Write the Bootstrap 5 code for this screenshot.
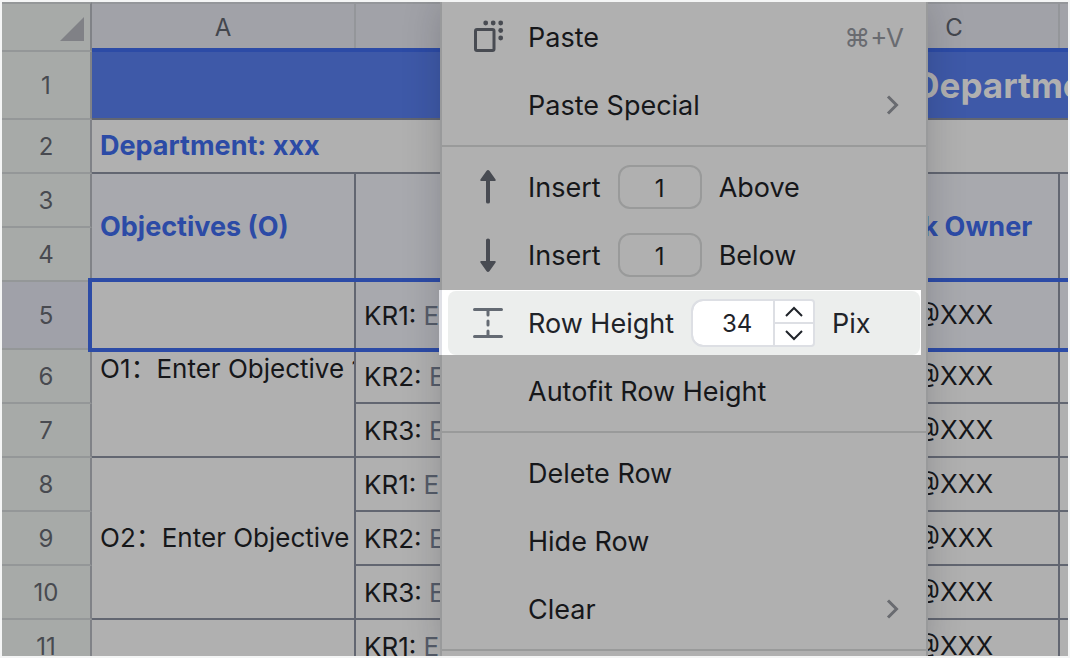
<!DOCTYPE html>
<html lang="en">
<head>
<meta charset="utf-8">
<meta name="viewport" content="width=device-width, initial-scale=1">
<title>Row height menu</title>
<link href="https://cdn.jsdelivr.net/npm/bootstrap@5.3.0/dist/css/bootstrap.min.css" rel="stylesheet">
<style>
  body { font-family: Inter, "Noto Sans CJK SC", sans-serif; background: #f4f5f5; color: #16171a; padding: 2px; }
  .sheet-view { background: #b0b0b0; }

  /* Spreadsheet grid */
  .sheet { table-layout: fixed; width: 2024px; border-collapse: separate; border-spacing: 0; font-size: 26px; line-height: 32px; }
  .sheet .w-num { width: 90px; }
  .sheet .w-a { width: 264px; }
  .sheet .w-b { width: 494px; }
  .sheet .w-c { width: 210px; }
  .sheet th, .sheet td { height: 54px; padding: 0 8px; border: 0 solid #626671; border-width: 0 2px 2px 0; vertical-align: middle; white-space: nowrap; overflow: hidden; background: #b0b0b0; }
  .sheet thead th { height: 50px; padding-top: 2px; border-color: #94969a; border-width: 2px 2px 2px 0; background: #a1a2a8; color: #43464d; font-size: 24px; font-weight: 400; text-align: center; }
  .sheet th.num, .sheet thead th.corner { background: #a7aaa8; color: #484a50; border-color: #949798; border-right-color: #808287; font-size: 24px; font-weight: 400; text-align: center; padding: 2px 0 0; }
  .sheet thead th.corner { position: relative; overflow: visible; }
  .sheet thead th.corner::after { content: ""; position: absolute; z-index: 1; left: 90px; bottom: -2px; width: 2000px; height: 4px; background: #2c4ba6; }
  .sheet .tall > * { height: 68px; }
  .sheet td.title { background: #3e59a8; color: #b0b0b0; font-size: 35px; line-height: 44px; font-weight: 700; text-align: center; }
  .sheet .heading { color: #2c4ba6; font-size: 27px; font-weight: 700; }
  .sheet td.shade { background: #a8a9ae; }
  .sheet td.result { padding-top: 2px; }
  .sheet .hint { color: #555c69; }
  .sheet .picked th.num { position: relative; overflow: visible; background: #a0a1a9; }
  .sheet .picked th.num::after { content: ""; position: absolute; z-index: 1; left: 86px; top: -4px; bottom: -4px; width: 2000px; border: 4px solid #2c4ba6; pointer-events: none; }
  .corner svg { display: block; margin: 2px 6px 0 auto; }

  /* Context menu */
  .ctx-menu { left: 438px; top: 0; bottom: 0; z-index: 2; width: 488px; padding-top: 1px; background: #b0b0b0; border: solid #999a9b; border-width: 0 2px; box-shadow: 0 0 36px rgba(20, 22, 30, .2); font-size: 27px; line-height: 32px; }
  .entry { height: 68px; padding: 0 22px 0 30px; gap: 17px; }
  .entry > span, .entry > label { padding-top: 2px; }
  button.entry { background: none; border: 0; color: inherit; width: 100%; text-align: left; }
  .entry-icon { width: 32px; height: 40px; margin-right: 7px; flex: none; color: #484b52; }
  .rule { height: 2px; margin: 6px 0; background: #999a9a; }
  .keys { color: #696b70; font-size: 26px; }
  .arrow { color: #696b70; margin-right: 4px; }
  .count { width: 84px; height: 44px; border: 2px solid #999a9a; border-radius: 12px; background: none; color: inherit; font-size: 24px; text-align: center; padding: 2px 0 0; }

  /* Spotlit entry */
  .spot { position: relative; color: #1f2329; }
  .spot::before { content: ""; position: absolute; left: -3px; right: 5px; top: 1px; height: 65px; background: #fff; border-left: 3px solid #dfe0e6; }
  .spot::after { content: ""; position: absolute; left: 6px; right: 6px; top: 2px; height: 64px; background: #eceeed; border-radius: 8px; }
  .spot > * { position: relative; z-index: 1; }
  .spot .entry-icon { color: #646a73; }
  .stepper { width: 124px; height: 48px; border: 2px solid #dddfe4; border-radius: 12px 4px 4px 12px; background: #dddfe4; overflow: hidden; }
  .stepper input { width: 80px; border: 0; padding: 2px 0 0 8px; background: #fff; color: inherit; font-size: 24px; text-align: center; border-radius: 10px 0 0 10px; }
  .stepper .steps { gap: 2px; margin-left: 2px; }
  .stepper button { border: 0; padding: 0; background: #fff; color: #1f2329; flex: 1; display: flex; align-items: center; justify-content: center; }
</style>
</head>
<body class="vh-100">
<main class="sheet-view position-relative overflow-hidden h-100">
  <table class="sheet">
    <colgroup><col class="w-num"><col class="w-a"><col class="w-b"><col class="w-c"><col></colgroup>
    <thead>
      <tr>
        <th class="corner"><svg width="24" height="24" viewBox="0 0 24 24" aria-hidden="true"><path d="M24 0v24H0z" fill="#808186"/></svg></th>
        <th scope="col">A</th><th scope="col"></th><th scope="col">C</th><th scope="col"></th>
      </tr>
    </thead>
    <tbody>
      <tr class="tall"><th class="num" scope="row">1</th><td class="title" colspan="4">Department OKR</td></tr>
      <tr><th class="num" scope="row">2</th><td class="heading" colspan="4">Department: xxx</td></tr>
      <tr><th class="num" scope="row">3</th><td class="heading shade" rowspan="2">Objectives (O)</td><td class="shade" rowspan="2"></td><td class="heading shade text-center" rowspan="2">Task Owner</td><td class="shade" rowspan="2"></td></tr>
      <tr><th class="num" scope="row">4</th></tr>
      <tr class="tall picked"><th class="num" scope="row">5</th><td rowspan="3">O1：Enter Objective 1</td><td class="result shade">KR1: <span class="hint">E</span></td><td class="shade text-center">@XXX</td><td class="shade"></td></tr>
      <tr><th class="num" scope="row">6</th><td class="result">KR2: <span class="hint">E</span></td><td class="text-center">@XXX</td><td></td></tr>
      <tr><th class="num" scope="row">7</th><td class="result">KR3: <span class="hint">E</span></td><td class="text-center">@XXX</td><td></td></tr>
      <tr><th class="num" scope="row">8</th><td rowspan="3">O2：Enter Objective</td><td class="result">KR1: <span class="hint">E</span></td><td class="text-center">@XXX</td><td></td></tr>
      <tr><th class="num" scope="row">9</th><td class="result">KR2: <span class="hint">E</span></td><td class="text-center">@XXX</td><td></td></tr>
      <tr><th class="num" scope="row">10</th><td class="result">KR3: <span class="hint">E</span></td><td class="text-center">@XXX</td><td></td></tr>
      <tr><th class="num" scope="row">11</th><td></td><td class="result">KR1: <span class="hint">E</span></td><td class="text-center">@XXX</td><td></td></tr>
    </tbody>
  </table>

  <div class="ctx-menu position-absolute">
    <button type="button" class="entry d-flex align-items-center">
      <svg class="entry-icon" viewBox="0 0 32 40" aria-hidden="true"><rect x="3.5" y="12.500" width="18.500" height="21" rx="1.500" fill="none" stroke="currentColor" stroke-width="3"/><g fill="currentColor"><circle cx="13.700" cy="6" r="2.400"/><circle cx="21.200" cy="6" r="2.400"/><circle cx="28.700" cy="6" r="2.400"/><circle cx="28.700" cy="13.500" r="2.400"/><circle cx="28.700" cy="21" r="2.400"/></g></svg>
      <span>Paste</span><span class="keys ms-auto">⌘+V</span>
    </button>
    <button type="button" class="entry d-flex align-items-center">
      <span class="entry-icon"></span><span>Paste Special</span>
      <svg class="arrow ms-auto" width="16" height="22" viewBox="0 0 16 22" fill="none" stroke="currentColor" stroke-width="3" aria-hidden="true"><path d="M4 2.500l8.500 8.500-8.500 8.500"/></svg>
    </button>
    <div class="rule"></div>
    <div class="entry d-flex align-items-center">
      <svg class="entry-icon" viewBox="0 0 32 40" fill="currentColor" aria-hidden="true"><path d="M16 3q.8 0 1.400.8l6.200 8.700q.6 1.500-.9 1.500H18v21q0 1.500-2 1.500t-2-1.500V14H9.300q-1.500 0-.9-1.500l6.200-8.700Q15.200 3 16 3z"/></svg>
      <label for="above">Insert</label><input id="above" class="count" type="text" inputmode="numeric" value="1"><span>Above</span>
    </div>
    <div class="entry d-flex align-items-center">
      <svg class="entry-icon" viewBox="0 0 32 40" fill="currentColor" aria-hidden="true"><path d="M16 37q.8 0 1.400-.8l6.200-8.700q.6-1.500-.9-1.500H18V5q0-1.500-2-1.500T14 5v21H9.300q-1.500 0-.9 1.500l6.200 8.700q.6.8 1.400.8z"/></svg>
      <label for="below">Insert</label><input id="below" class="count" type="text" inputmode="numeric" value="1"><span>Below</span>
    </div>
    <div class="entry spot d-flex align-items-center">
      <svg class="entry-icon" viewBox="0 0 32 40" fill="none" stroke="currentColor" stroke-width="3" stroke-linecap="round" aria-hidden="true"><path d="M2.500 6.500h27M2.500 33.500h27"/><path d="M16 8v4M16 18v4M16 28v4"/></svg>
      <label for="height">Row Height</label>
      <div class="stepper d-flex">
        <input id="height" type="text" inputmode="numeric" value="34">
        <div class="steps d-flex flex-column flex-fill">
          <button type="button" aria-label="Increase"><svg width="20" height="12" viewBox="0 0 20 12" fill="none" stroke="currentColor" stroke-width="2" aria-hidden="true"><path d="M2 10l8-8 8 8"/></svg></button>
          <button type="button" aria-label="Decrease"><svg width="20" height="12" viewBox="0 0 20 12" fill="none" stroke="currentColor" stroke-width="2" aria-hidden="true"><path d="M2 2l8 8 8-8"/></svg></button>
        </div>
      </div>
      <span>Pix</span>
    </div>
    <button type="button" class="entry d-flex align-items-center"><span class="entry-icon"></span><span>Autofit Row Height</span></button>
    <div class="rule"></div>
    <button type="button" class="entry d-flex align-items-center"><span class="entry-icon"></span><span>Delete Row</span></button>
    <button type="button" class="entry d-flex align-items-center"><span class="entry-icon"></span><span>Hide Row</span></button>
    <button type="button" class="entry d-flex align-items-center">
      <span class="entry-icon"></span><span>Clear</span>
      <svg class="arrow ms-auto" width="16" height="22" viewBox="0 0 16 22" fill="none" stroke="currentColor" stroke-width="3" aria-hidden="true"><path d="M4 2.500l8.500 8.500-8.500 8.500"/></svg>
    </button>
    <div class="rule"></div>
  </div>
</main>
<script src="https://cdn.jsdelivr.net/npm/bootstrap@5.3.0/dist/js/bootstrap.bundle.min.js"></script>
</body>
</html>
